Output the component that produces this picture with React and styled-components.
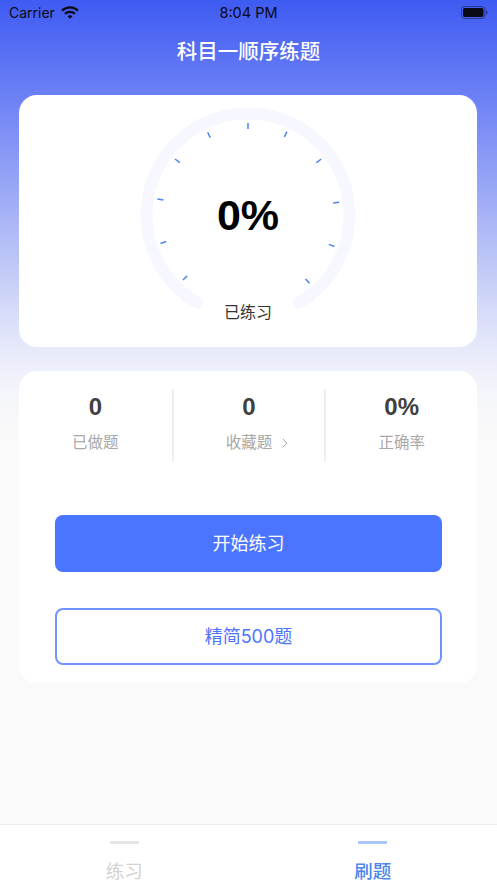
import styled, { createGlobalStyle } from 'styled-components'

const GlobalStyle = createGlobalStyle`
  html, body {
    margin: 0;
    padding: 0;
    background: #fafafa;
  }
  * {
    box-sizing: border-box;
  }
`

const Page = styled.div`
  width: 497px;
  height: 883px;
  overflow: hidden;
  display: flex;
  flex-direction: column;
  font-family: Inter, "Noto Sans CJK SC", sans-serif;
  background: linear-gradient(180deg, #3e5bf2 0px, #6c80f5 95px, #cdd4f7 293px, #e6e9fa 347px, #f5f6fb 393px, #fafafa 440px, #fafafa 883px);
`

const StatusBar = styled.div`
  height: 24px;
  padding: 0 9px;
  display: grid;
  grid-template-columns: 1fr auto 1fr;
  align-items: center;
  color: #0a0a14;
  font-size: 14.5px;
`

const Carrier = styled.div`
  display: flex;
  align-items: center;
  gap: 6px;
  font-size: 14px;
`

const Battery = styled.div`
  justify-self: end;
  display: flex;
  align-items: center;
`

const Title = styled.h1`
  margin: 0;
  height: 71px;
  padding-top: 14px;
  text-align: center;
  color: #fff;
  font-size: 20.5px;
  line-height: 28px;
  font-weight: 500;
`

const Content = styled.div`
  flex: 1;
  padding: 0 20px 0 19px;
  display: flex;
  flex-direction: column;
  gap: 24px;
`

const Card = styled.section`
  background: #fff;
  border-radius: 18px;
`

const GaugeCard = styled(Card)`
  height: 252px;
  display: flex;
  justify-content: center;
  padding-top: 12px;
`

const Gauge = styled.div`
  position: relative;
  width: 216px;
  height: 216px;
`

const GaugeValue = styled.div`
  position: absolute;
  inset: 0;
  display: flex;
  align-items: center;
  justify-content: center;
  color: #000;
  font-family: "Liberation Sans", sans-serif;
  font-size: 43px;
  font-weight: 700;
`

const GaugeLabel = styled.div`
  position: absolute;
  left: 0;
  right: 0;
  top: 193px;
  text-align: center;
  color: #333;
  font-size: 16px;
  line-height: 24px;
`

const PracticeCard = styled(Card)`
  height: 312px;
  padding: 18px 35px 0 36px;
`

const Stats = styled.div`
  display: grid;
  grid-template-columns: repeat(3, 1fr);
  margin: 0 -35px 0 -36px;
  height: 72px;
`

const Stat = styled.div`
  display: flex;
  flex-direction: column;
  align-items: center;
  gap: 6px;
  border-left: ${(props) => (props.$first ? '0' : '2px solid #eeeeee')};
`

const StatValue = styled.div`
  color: #404040;
  font-family: "Liberation Sans", sans-serif;
  font-size: 24px;
  line-height: 36px;
  font-weight: 700;
`

const StatLabel = styled.div`
  position: relative;
  color: #a8a8a8;
  font-size: 15.5px;
  line-height: 24px;
`

const Chevron = styled.svg`
  position: absolute;
  left: 56px;
  top: 7px;
`

const PrimaryButton = styled.button`
  display: block;
  width: 100%;
  height: 57px;
  margin-top: 54px;
  padding: 0 0 3px;
  border: 0;
  border-radius: 8px;
  background: #4c75ff;
  color: #fff;
  font-family: inherit;
  font-size: 18px;
`

const OutlineButton = styled.button`
  display: block;
  width: 100%;
  height: 57px;
  margin-top: 36px;
  padding: 0 0 3px;
  border: 2px solid #7093fe;
  border-radius: 8px;
  background: #fff;
  color: #4c75ff;
  font-family: inherit;
  font-size: 18px;
`

const TabBar = styled.nav`
  height: 59px;
  flex-shrink: 0;
  display: grid;
  grid-template-columns: 1fr 1fr;
  background: #fff;
  border-top: 1px solid #ececec;
`

const Tab = styled.div`
  display: flex;
  flex-direction: column;
  align-items: center;
  padding-top: 16px;
  color: ${(props) => (props.$active ? '#4a86ee' : '#d2d2d2')};
  font-size: 18.5px;
  font-weight: ${(props) => (props.$active ? 500 : 400)};
  line-height: 28px;
`

const TabMark = styled.span`
  width: 29px;
  height: 3px;
  margin-bottom: 13px;
  background: ${(props) => (props.$active ? '#a9c6f8' : '#e6e6e6')};
`

const tickAngles = [0, 25, 52.6, 82, 110, 138, -26, -52.5, -80, -108, -135]

function polar(radius, angle) {
  const rad = (angle * Math.PI) / 180
  return [108 + radius * Math.sin(rad), 108 - radius * Math.cos(rad)]
}

function Wifi() {
  return (
    <svg width="18" height="13" viewBox="0 0 18 13" fill="none" stroke="#0a0a14" strokeWidth="2.2">
      <path d="M1 4.6C5.5 .3 12.5 .3 17 4.6" />
      <path d="M4 7.8C6.8 5.2 11.2 5.2 14 7.8" />
      <path d="M6.5 10.2 9 12.7 11.5 10.2C10 8.8 8 8.8 6.5 10.2Z" fill="#0a0a14" stroke="none" />
    </svg>
  )
}

function BatteryIcon() {
  return (
    <svg width="27" height="13" viewBox="0 0 27 13">
      <rect x="0.5" y="0.5" width="23.5" height="12" rx="3" fill="none" stroke="#0a0a14" strokeOpacity="0.45" />
      <rect x="2" y="2" width="20.5" height="9" rx="1.7" fill="#0a0a14" />
      <path d="M25 4.5c1 .3 1.5 1 1.5 2s-.5 1.7-1.5 2z" fill="#0a0a14" fillOpacity="0.45" />
    </svg>
  )
}

function GaugeDial() {
  const [startX, startY] = polar(101.5, -150)
  const [endX, endY] = polar(101.5, 150)
  return (
    <svg width="216" height="216" viewBox="0 0 216 216">
      <path
        d={`M${startX} ${startY}A101.5 101.5 0 1 1 ${endX} ${endY}`}
        fill="none"
        stroke="#f7f8ff"
        strokeWidth="12"
        strokeLinecap="round"
      />
      {tickAngles.map((angle) => {
        const [x1, y1] = polar(86, angle)
        const [x2, y2] = polar(92, angle)
        return <line key={angle} x1={x1} y1={y1} x2={x2} y2={y2} stroke="#4c84f5" strokeWidth="1.5" />
      })}
    </svg>
  )
}

export default function App() {
  return (
    <>
      <GlobalStyle />
      <Page>
        <StatusBar>
          <Carrier>
            Carrier
            <Wifi />
          </Carrier>
          <div>8:04 PM</div>
          <Battery>
            <BatteryIcon />
          </Battery>
        </StatusBar>
        <Title>科目一顺序练题</Title>
        <Content>
          <GaugeCard>
            <Gauge>
              <GaugeDial />
              <GaugeValue>0%</GaugeValue>
              <GaugeLabel>已练习</GaugeLabel>
            </Gauge>
          </GaugeCard>
          <PracticeCard>
            <Stats>
              <Stat $first>
                <StatValue>0</StatValue>
                <StatLabel>已做题</StatLabel>
              </Stat>
              <Stat>
                <StatValue>0</StatValue>
                <StatLabel>
                  收藏题
                  <Chevron width="6" height="10" viewBox="0 0 6 10" fill="none" stroke="#a8a8a8" strokeWidth="1">
                    <path d="M.7 .7 5 5 .7 9.3" />
                  </Chevron>
                </StatLabel>
              </Stat>
              <Stat>
                <StatValue>0%</StatValue>
                <StatLabel>正确率</StatLabel>
              </Stat>
            </Stats>
            <PrimaryButton>开始练习</PrimaryButton>
            <OutlineButton>精简500题</OutlineButton>
          </PracticeCard>
        </Content>
        <TabBar>
          <Tab>
            <TabMark />
            练习
          </Tab>
          <Tab $active>
            <TabMark $active />
            刷题
          </Tab>
        </TabBar>
      </Page>
    </>
  )
}
